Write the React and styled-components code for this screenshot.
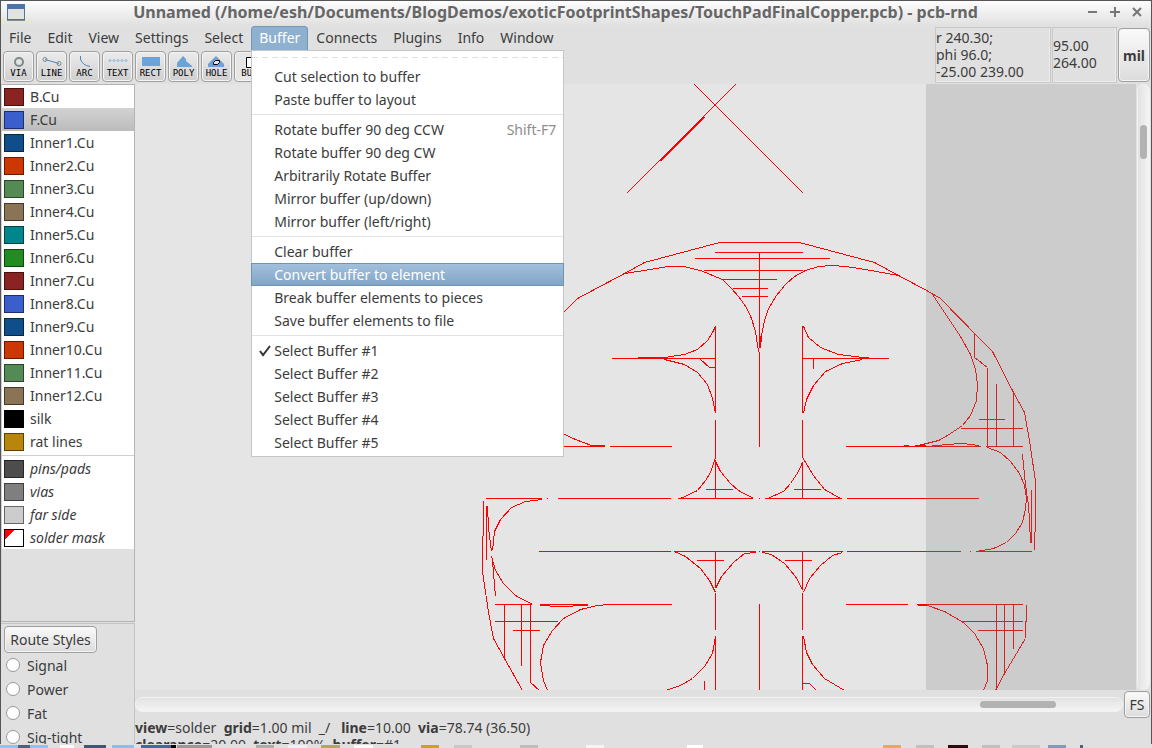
import React, { useState } from 'react';
import styled, { createGlobalStyle } from 'styled-components';

const GlobalStyle = createGlobalStyle`
  * {
    box-sizing: border-box;
  }

  body {
    margin: 0;
    overflow: hidden;
    background: #e0e0e0;
    color: #3c3c3c;
    font-family: 'Noto Sans', 'Open Sans', sans-serif;
    font-size: 14px;
    line-height: 17px;
  }

  button {
    font: inherit;
    color: inherit;
    padding: 0;
    border: 0;
    background: none;
  }
`;

const Desktop = styled.div`
  display: flex;
  flex-direction: column;
  height: 100vh;
`;

const Window = styled.div`
  display: flex;
  flex-direction: column;
  flex: 1;
  min-height: 0;
  border: 1px solid #555;
  border-bottom: 0;
`;

const TitleBar = styled.header`
  display: flex;
  align-items: center;
  height: 25px;
  padding: 0 7px 3px 6px;
  background: linear-gradient(#fdfdfd, #e0e0e0);
`;

const Title = styled.h1`
  flex: 1;
  margin: 0;
  color: #666;
  font-size: 16px;
  line-height: 22px;
  text-align: center;
  white-space: nowrap;
`;

const WindowButtons = styled.div`
  display: flex;
  gap: 8px;

  button {
    display: flex;
    width: 14px;
    height: 14px;
  }
`;

const Header = styled.div`
  display: flex;
  height: 58px;
`;

const Bars = styled.div`
  display: flex;
  flex-direction: column;
  flex: 1;
`;

const MenuBar = styled.nav`
  display: flex;
  height: 24px;
`;

const MenuSlot = styled.div`
  position: relative;
`;

const MenuTitle = styled.button`
  display: block;
  height: 24px;
  padding: 0 7px 2px;
  border: 1px solid ${(props) => (props.$open ? '#7397b8' : 'transparent')};
  border-bottom: 0;
  border-radius: 4px 4px 0 0;
  background: ${(props) => (props.$open ? '#8fb1d0' : 'none')};
  color: ${(props) => (props.$open ? '#fff' : 'inherit')};
`;

const Menu = styled.div`
  position: absolute;
  z-index: 2;
  top: 100%;
  left: 0;
  width: 313px;
  padding-bottom: 2px;
  border: 1px solid #c6c6c6;
  background: #fff;
`;

const TearOff = styled.div`
  height: 14px;
  padding-top: 6px;

  &::before {
    content: '';
    display: block;
    height: 1px;
    background: repeating-linear-gradient(90deg, #dedede 0 6px, #fff 6px 10px);
  }
`;

const MenuItem = styled.button`
  display: flex;
  align-items: center;
  width: calc(100% + 2px);
  height: 23px;
  margin: 0 -1px;
  padding: 0 7px;
  border: 1px solid ${(props) => (props.$active ? '#6d93b5' : 'transparent')};
  background: ${(props) => (props.$active ? 'linear-gradient(#a2c0dc, #82a5c6)' : 'none')};
  color: ${(props) => (props.$active ? '#fff' : 'inherit')};
  text-align: left;
`;

const Tick = styled.span`
  display: flex;
  width: 15px;
`;

const Shortcut = styled.span`
  margin-left: auto;
  color: #8c8c8c;
`;

const Separator = styled.hr`
  height: 1px;
  margin: 3px 0;
  border: 0;
  background: #e2e2e2;
`;

const Toolbar = styled.div`
  display: flex;
  gap: 2px;
  padding: 1px 2px;
`;

const Raised = styled.button`
  border: 1px solid #a0a0a0;
  border-radius: 4px;
  background: linear-gradient(#fafafa, #dcdcdc);
  box-shadow: inset 0 0 0 1px #f4f4f4;
`;

const ToolButton = styled(Raised)`
  display: flex;
  flex-direction: column;
  align-items: center;
  width: 31px;
  height: 31px;
  padding-top: 4px;
  background: ${(props) => (props.$pressed ? '#e6e6e6' : 'linear-gradient(#ececec, #cfcfcf)')};
  color: #000;
  font-family: 'DejaVu Sans Mono', monospace;
  font-size: 9px;
  line-height: 10px;
`;

const Readouts = styled.div`
  display: flex;
  gap: 1px;
`;

const Readout = styled.div`
  display: flex;
  flex-direction: column;
  justify-content: center;
  width: ${(props) => props.$width}px;
  margin: 1px 0;
  padding-bottom: 2px;
  border: 1px solid #c8c8c8;
  box-shadow: inset -1px -1px 0 #ececec;
  white-space: nowrap;
`;

const UnitButton = styled(Raised)`
  width: 32px;
  margin: 2px 1px 2px 0;
  font-weight: 700;
`;

const Workspace = styled.div`
  display: flex;
  flex: 1;
  min-height: 0;
`;

const Sidebar = styled.aside`
  display: flex;
  flex-direction: column;
  gap: 1px;
  width: 134px;
  overflow: hidden;
`;

const Layers = styled.div`
  flex: 1;
  border: 1px solid #b4b4b4;
  border-left-color: #d0d0d0;
`;

const LayerGroup = styled.div`
  background: #fff;

  & + & {
    padding-top: 4px;
    background: linear-gradient(#fff 2px, #cfcfcf 2px 3px, #fff 3px);
    font-style: italic;
  }
`;

const Layer = styled.button`
  display: flex;
  align-items: center;
  gap: 6px;
  width: 100%;
  height: 23px;
  padding: 0 2px;
  background: ${(props) => (props.$selected ? 'linear-gradient(#d2d2d2, #bcbcbc)' : 'none')};
  font-style: inherit;
`;

const Swatch = styled.span`
  width: 20px;
  height: 18px;
  border: 1px solid ${(props) => (props.$mask ? '#000' : 'rgba(0, 0, 0, 0.5)')};
  background: ${(props) =>
    props.$mask ? 'linear-gradient(135deg, #f00 7px, #fff 7px)' : props.$color};
`;

const Routes = styled.form`
  height: 121px;
  padding: 2px;
  border-top: 1px solid #c4c4c4;
  border-right: 1px solid #c4c4c4;
`;

const RouteButton = styled(Raised)`
  display: block;
  width: 93px;
  height: 27px;
  margin-left: 1px;
`;

const Route = styled.label`
  display: flex;
  align-items: center;
  gap: 7px;
  height: 24px;
  padding-left: 3px;

  input {
    appearance: none;
    width: 14px;
    height: 14px;
    margin: 0;
    border: 1px solid #999;
    border-radius: 50%;
    background: #fff;
  }

  input:checked {
    border: 4px solid #7397b8;
  }
`;

const Main = styled.main`
  display: flex;
  flex-direction: column;
  flex: 1;
  min-width: 0;
`;

const View = styled.div`
  display: flex;
  flex: 1;
  min-height: 0;
`;

const Board = styled.svg`
  flex: 1;
  min-width: 0;
  height: 100%;
  background: #e5e5e5;
`;

const VerticalTrough = styled.div`
  width: 13px;
  margin: 0 1px;
  padding: 40px 2px 0;
  border: 1px solid #f2f2f2;
  border-radius: 7px;
  background: linear-gradient(90deg, #e2e2e2, #f4f4f4);
`;

const HorizontalTrough = styled.div`
  flex: 1;
  display: flex;
  justify-content: flex-end;
  height: 15px;
  margin-top: 7px;
  padding: 3px 66px 3px 0;
  border: 1px solid #f2f2f2;
  border-radius: 7px;
  background: linear-gradient(#e2e2e2, #f4f4f4);
`;

const Thumb = styled.div`
  width: ${(props) => props.$width}px;
  height: ${(props) => props.$height}px;
  border-radius: 4px;
  background: #b2b2b2;
`;

const BottomRow = styled.div`
  display: flex;
  height: 29px;
`;

const FullScreenButton = styled(Raised)`
  width: 26px;
  height: 27px;
  margin: 1px;
`;

const Status = styled.footer`
  height: 25px;
  overflow: hidden;
  white-space: pre;
`;

const Panel = styled.svg`
  display: block;
  width: 100%;
  height: 4px;
`;

const menuTitles = [
  'File', 'Edit', 'View', 'Settings', 'Select', 'Buffer', 'Connects', 'Plugins', 'Info', 'Window',
];

const bufferMenu = [
  [{ label: 'Cut selection to buffer' }, { label: 'Paste buffer to layout' }],
  [
    { label: 'Rotate buffer 90 deg CCW', shortcut: 'Shift-F7' },
    { label: 'Rotate buffer 90 deg CW' },
    { label: 'Arbitrarily Rotate Buffer' },
    { label: 'Mirror buffer (up/down)' },
    { label: 'Mirror buffer (left/right)' },
  ],
  [
    { label: 'Clear buffer' },
    { label: 'Convert buffer to element', active: true },
    { label: 'Break buffer elements to pieces' },
    { label: 'Save buffer elements to file' },
  ],
  [
    { label: 'Select Buffer #1', checked: true },
    { label: 'Select Buffer #2' },
    { label: 'Select Buffer #3' },
    { label: 'Select Buffer #4' },
    { label: 'Select Buffer #5' },
  ],
];

const tools = [
  { name: 'VIA', icon: <circle cx="10" cy="6" r="4" fill="none" stroke="#7d8a8a" strokeWidth="2" /> },
  {
    name: 'LINE',
    icon: (
      <g fill="none" stroke="#7d8a8a">
        <path d="M3 3.500L17 7.500" stroke="#4a86c0" />
        <circle cx="3" cy="3.500" r="2" />
        <circle cx="17" cy="7.500" r="2" />
      </g>
    ),
  },
  { name: 'ARC', icon: <path d="M5.500 0V3Q7 9 15 10.500" fill="none" stroke="#4a86c0" /> },
  {
    name: 'TEXT',
    icon: (
      <path
        d="M1 4.500l1-1 1 1-1 1zM5 4.500l1-1 1 1-1 1zM9 4.500l1-1 1 1-1 1zM13 4.500l1-1 1 1-1 1zM17 4.500l1-1 1 1-1 1z"
        fill="none"
        stroke="#6ba3d8"
      />
    ),
  },
  { name: 'RECT', icon: <path d="M1 1h18v9H1z" fill="#6ba3d8" /> },
  { name: 'POLY', icon: <path d="M9 0l3 3v2l6 5v1H3V7z" fill="#6ba3d8" /> },
  {
    name: 'HOLE',
    icon: (
      <g>
        <path d="M9 0l8 8v3H1V8z" fill="#6ba3d8" />
        <path d="M6.500 8.500v-2l2-2h4v2l-2 2z" fill="#e5e5e5" stroke="#000" />
      </g>
    ),
  },
  {
    name: 'BUF',
    pressed: true,
    icon: <path d="M6.500 1.500h7l3 3v7h-10z" fill="#fff" stroke="#000" />,
  },
];

const copperLayers = [
  ['B.Cu', '#8b2323'],
  ['F.Cu', '#3a5fcd'],
  ['Inner1.Cu', '#104e8b'],
  ['Inner2.Cu', '#cd3700'],
  ['Inner3.Cu', '#548b54'],
  ['Inner4.Cu', '#8b7355'],
  ['Inner5.Cu', '#00868b'],
  ['Inner6.Cu', '#228b22'],
  ['Inner7.Cu', '#8b2323'],
  ['Inner8.Cu', '#3a5fcd'],
  ['Inner9.Cu', '#104e8b'],
  ['Inner10.Cu', '#cd3700'],
  ['Inner11.Cu', '#548b54'],
  ['Inner12.Cu', '#8b7355'],
  ['silk', '#000000'],
  ['rat lines', '#b8860b'],
];

const otherLayers = [
  ['pins/pads', '#4d4d4d'],
  ['vias', '#7f7f7f'],
  ['far side', '#cccccc'],
  ['solder mask', 'mask'],
];

const routeStyles = ['Signal', 'Power', 'Fat', 'Sig-tight'];

// [y, x1, x2]
const horizontals = [
  [242, 719, 799], [252, 715, 803], [258, 695, 830], [270, 704, 803], [279, 723, 777],
  [288, 733, 768], [296, 742, 768],
  [358, 612, 715], [357, 638, 664], [358, 802, 889], [357, 862, 869],
  [446, 560, 605], [445, 596, 605], [446, 610, 672], [446, 846, 981], [445, 904, 909],
  [445, 915, 926], [446, 986, 1023], [419, 979, 1005], [428, 961, 1023],
  [498, 486, 542], [498, 547, 548], [498, 558, 671], [498, 678, 753], [498, 759, 760],
  [498, 765, 842], [498, 847, 979], [489, 706, 733], [489, 794, 821],
  [551, 539, 671], [551, 674, 756], [551, 759, 760], [551, 762, 843], [551, 847, 961],
  [551, 970, 971], [551, 976, 1032], [560, 697, 724], [560, 785, 812],
  [604, 495, 532], [604, 540, 588], [605, 540, 550], [604, 609, 672], [604, 846, 908],
  [604, 917, 1023], [605, 918, 926],
  [621, 495, 558], [630, 513, 540], [621, 963, 1023], [630, 978, 1023],
];

// [x, y1, y2]
const verticals = [
  [759, 252, 348], [760, 336, 348], [759, 354, 447], [759, 604, 690],
  [715, 326, 413], [715, 420, 457], [715, 460, 498], [715, 551, 587], [715, 593, 630], [715, 636, 690],
  [802, 326, 413], [802, 420, 457], [802, 462, 498], [802, 551, 590], [802, 593, 630], [802, 636, 690],
  [813, 358, 369], [704, 681, 690],
  [974, 333, 357], [987, 368, 446], [996, 384, 446], [1013, 394, 446], [1031, 490, 543],
  [486, 506, 560], [504, 604, 657], [521, 604, 666], [530, 604, 682],
  [996, 604, 688], [1004, 604, 673], [1013, 604, 649],
];

const outlines = [
  '693,83 803,193', '736,83 626,193', '659,161 703,117', '660,161 704,117',
  '719,242 644,262 624,273 577,298 560,315',
  '799,242 874,262 898,275 928,291 940,298 974,333 992,351 1013,392 1024,412 1029,440 1035,481 1035,514 1034,550',
  '624,273 650,269 668,266 683,266 700,270 722,279 731,288 738,296 746,307 751,318 755,331 757,345 759,354',
  '760,348 761,335 764,320 768,308 776,295 785,284 794,276 805,270 818,266 832,265 845,266 865,269 898,275',
  '664,357 684,354 697,349 707,340 712,332 715,326',
  '664,359 684,364 697,372 707,384 712,398 715,413',
  '700,359 709,367 715,367',
  '803,326 808,337 820,347 838,354 862,357',
  '862,359 842,363 825,371 813,385 806,399 803,413',
  '560,432 575,439 591,445 605,446',
  '932,294 946,315 960,336 970,354 975,369 977,384 976,400 970,415 962,425 947,435 938,440 918,445',
  '926,446 947,444 960,443 972,444 981,446', '955,313 974,333',
  '974,357 987,367',
  '987,447 1000,452 1010,461 1019,473 1024,485 1026,497 1025,508 1022,522 1015,533 1006,542 993,548 976,551',
  '1022,454 1024,475 1026,492 1028,505 1029,520 1030,543',
  '715,457 710,472 705,480 697,490 680,498', '715,461 720,471 730,483 738,490 753,498',
  '802,462 798,471 790,483 783,491 767,498', '802,457 813,475 824,489 840,498',
  '674,551 685,556 700,568 709,580 715,592', '715,588 721,576 733,562 744,553 756,552',
  '762,552 771,554 784,563 795,576 802,589', '803,592 809,578 820,565 832,555 842,552',
  '715,636 712,653 704,666 692,678 680,685 665,690',
  '803,636 806,652 812,664 824,678 844,690', '802,683 809,683 816,690',
  '483,500 483,535 482,536 482,571 488,612 493,638 504,658 522,690',
  '487,506 488,527 491,551', '492,560 495,596',
  '542,499 525,501 511,507 500,519 494,531 492,550',
  '491,556 495,570 503,583 515,595 532,604',
  '530,682 539,690',
  '609,604 597,605 580,609 563,618 552,630 543,645 540,662 543,680 547,690',
  '540,605 558,606 588,605',
  '917,605 927,605 944,611 963,622 974,633 983,648 987,665 987,680 983,690',
  '1026,605 1025,638 1004,673 995,690',
];

// straight runs start on the pixel edge, so both end pixels are filled
const copperPath = [
  ...horizontals.map(([y, x1, x2]) => `M${x1 - 0.5} ${y}H${x2 - 0.5}`),
  ...verticals.map(([x, y1, y2]) => `M${x} ${y1 - 0.5}V${y2 - 0.5}`),
  ...outlines.map((points) => `M${points.split(' ').join('L')}`),
].join('');

// [x, width, colour] of the launcher icons peeking out below the window
const launchers = [
  [0, 48, '#8cc4f4'], [18, 12, '#50607a'], [60, 14, '#fafafa'], [84, 22, '#3c5878'],
  [112, 22, '#8cbfe8'], [141, 31, '#3d6c9c'], [171, 5, '#000'], [177, 35, '#999'],
  [256, 18, '#a8b0a4'], [288, 19, '#f0f0f4'], [321, 19, '#b0a860'], [354, 19, '#fafafa'],
  [421, 18, '#c9a227'], [454, 18, '#c8c8c8'], [520, 18, '#bdbdbd'], [586, 18, '#f4f4f4'],
  [687, 16, '#fff'], [883, 18, '#e8a860'], [916, 18, '#c0c0c0'], [948, 20, '#2a0c10'],
  [982, 18, '#c0c0c0'], [1012, 28, '#cacaca'], [1048, 18, '#7c9cbc'], [1080, 3, '#50607a'],
];

const BufferMenu = () => (
  <Menu role="menu" aria-label="Buffer">
    <TearOff />
    {bufferMenu.map((group, index) => (
      <React.Fragment key={group[0].label}>
        {index > 0 && <Separator />}
        {group.map((item) => (
          <MenuItem key={item.label} role="menuitem" $active={item.active}>
            <Tick>
              {item.checked && (
                <svg width="12" height="12" viewBox="0 0 12 12">
                  <path d="M1 6l3 4 7-9" fill="none" stroke="#333" strokeWidth="2" />
                </svg>
              )}
            </Tick>
            {item.label}
            {item.shortcut && <Shortcut>{item.shortcut}</Shortcut>}
          </MenuItem>
        ))}
      </React.Fragment>
    ))}
  </Menu>
);

const LayerRow = ({ name, color, selected, onSelect }) => (
  <Layer $selected={selected} onClick={onSelect}>
    <Swatch $color={color} $mask={color === 'mask'} />
    {name}
  </Layer>
);

const BoardView = () => (
  <Board role="img" aria-label="Board layout">
    <defs>
      <linearGradient id="copper" gradientUnits="userSpaceOnUse" x1="925" y1="0" x2="927" y2="0">
        <stop offset="0.5" stopColor="#ff0000" />
        <stop offset="0.5" stopColor="#d42424" />
      </linearGradient>
    </defs>
    <rect x="791" width="100%" height="100%" fill="#cccccc" />
    <g transform="translate(-134.5 -83.5)">
      <path d={copperPath} fill="none" stroke="url(#copper)" shapeRendering="crispEdges" />
    </g>
  </Board>
);

const App = () => {
  const [layer, setLayer] = useState('F.Cu');
  const [openMenu, setOpenMenu] = useState('Buffer');

  return (
    <Desktop>
      <GlobalStyle />
      <Window>
        <TitleBar>
          <svg width="18" height="17" viewBox="0 0 18 17">
            <path d="M0 0h18v16H0z" fill="#4c74a4" />
            <path d="M1 5h16v10H1z" fill="#e2e4e2" />
            <path d="M0 16h18v1H0z" fill="#888" />
          </svg>
          <Title>
            Unnamed (/home/esh/Documents/BlogDemos/exoticFootprintShapes/TouchPadFinalCopper.pcb) - pcb-rnd
          </Title>
          <WindowButtons>
            <button aria-label="Minimize">
              <svg width="14" height="14"><path d="M2 7h9" stroke="#777" strokeWidth="2" /></svg>
            </button>
            <button aria-label="Maximize">
              <svg width="14" height="14"><path d="M2 7h10M7 2v10" stroke="#777" strokeWidth="2" /></svg>
            </button>
            <button aria-label="Close">
              <svg width="14" height="14"><path d="M3 3l8 8M11 3l-8 8" stroke="#777" strokeWidth="2" /></svg>
            </button>
          </WindowButtons>
        </TitleBar>

        <Header>
          <Bars>
            <MenuBar>
              {menuTitles.map((title) => (
                <MenuSlot key={title}>
                  <MenuTitle $open={openMenu === title} onClick={() => setOpenMenu(title)}>
                    {title}
                  </MenuTitle>
                  {title === 'Buffer' && openMenu === title && <BufferMenu />}
                </MenuSlot>
              ))}
            </MenuBar>
            <Toolbar>
              {tools.map((tool) => (
                <ToolButton key={tool.name} $pressed={tool.pressed}>
                  <svg width="20" height="12" viewBox="0 0 20 12">{tool.icon}</svg>
                  {tool.name}
                </ToolButton>
              ))}
            </Toolbar>
          </Bars>
          <Readouts>
            <Readout $width={116}>
              <span>r 240.30;</span>
              <span>phi 96.0;</span>
              <span>-25.00 239.00</span>
            </Readout>
            <Readout $width={65}>
              <span>95.00</span>
              <span>264.00</span>
            </Readout>
            <UnitButton>mil</UnitButton>
          </Readouts>
        </Header>

        <Workspace>
          <Sidebar>
            <Layers>
              {[copperLayers, otherLayers].map((group) => (
                <LayerGroup key={group[0][0]}>
                  {group.map(([name, color]) => (
                    <LayerRow
                      key={name}
                      name={name}
                      color={color}
                      selected={layer === name}
                      onSelect={() => setLayer(name)}
                    />
                  ))}
                </LayerGroup>
              ))}
            </Layers>
            <Routes>
              <RouteButton type="button">Route Styles</RouteButton>
              {routeStyles.map((style) => (
                <Route key={style}>
                  <input type="radio" name="route" value={style} />
                  {style}
                </Route>
              ))}
            </Routes>
          </Sidebar>

          <Main>
            <View>
              <BoardView />
              <VerticalTrough>
                <Thumb $width={7} $height={34} />
              </VerticalTrough>
            </View>
            <BottomRow>
              <HorizontalTrough>
                <Thumb $width={76} $height={7} />
              </HorizontalTrough>
              <FullScreenButton>FS</FullScreenButton>
            </BottomRow>
            <Status>
              <b>view</b>=solder  <b>grid</b>=1.00 mil  _/   <b>line</b>=10.00  <b>via</b>=78.74 (36.50){'\n'}
              <b>clearance</b>=20.00  <b>text</b>=100%  <b>buffer</b>=#1
            </Status>
          </Main>
        </Workspace>
      </Window>
      <Panel aria-hidden="true">
        {launchers.map(([x, width, color]) => (
          <rect key={x} x={x} y="1" width={width} height="3" fill={color} />
        ))}
      </Panel>
    </Desktop>
  );
};

export default App;
